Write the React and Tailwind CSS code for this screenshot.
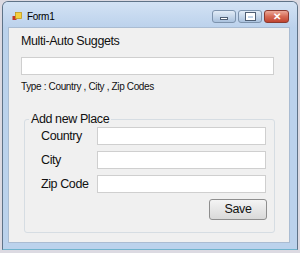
export default function App() {
  const font = "font-['Liberation_Sans',Arial,sans-serif]";
  return (
    <div className={`w-[300px] h-[253px] overflow-hidden bg-[#dcdae2] ${font}`}>
      <div className="ml-[2px] mt-[1px] w-[296px] h-[249px] rounded-t-[6px] border border-[#5f7388] border-b-[#6fb3cc] bg-[#bbd2ec] flex flex-col">
        {/* title bar */}
        <div className="h-[25px] rounded-t-[5px] bg-gradient-to-b from-[#d3e2f4] to-[#bcd2ec] flex items-start">
          <svg width="10" height="10" viewBox="0 0 10 10" className="ml-[9px] mt-[10px] shrink-0">
            <rect x="0.5" y="4" width="4" height="4" fill="#c0392b" />
            <rect x="3.5" y="0.5" width="6" height="6" fill="#f4d03f" stroke="#c49a1a" strokeWidth="0.8" />
          </svg>
          <span className="ml-[5px] mt-[9px] text-[10px] leading-[12px] tracking-[-0.3px] text-black">Form1</span>
          <div className="ml-auto mr-[8px] mt-[8px] flex gap-[2px]">
            <div className="w-[24px] h-[13px] rounded-[3px] border border-[#7d93ad] bg-gradient-to-b from-[#e2ecf7] via-[#c6d7ea] to-[#aac2de] flex items-center justify-center">
              <div className="w-[8px] h-[3px] mt-[4px] bg-white border border-[#4f5f74]" />
            </div>
            <div className="w-[24px] h-[13px] rounded-[3px] border border-[#7d93ad] bg-gradient-to-b from-[#e2ecf7] via-[#c6d7ea] to-[#aac2de] flex items-center justify-center">
              <div className="w-[9px] h-[7px] border-[2px] border-t-[3px] border-white outline outline-1 outline-[#4f5f74]" />
            </div>
            <div className="w-[25px] h-[13px] rounded-[3px] border border-[#8a3a30] bg-gradient-to-b from-[#eba898] via-[#d66a55] to-[#c04430] flex items-center justify-center">
              <span className="text-white text-[10px] leading-[10px] font-bold">✕</span>
            </div>
          </div>
        </div>
        {/* client area */}
        <div className="ml-[5px] w-[282px] h-[216px] bg-[#f0f0f0] border border-[#aabcd2] flex flex-col text-[#111]">
          <div className="ml-[12px] mt-[5px] text-[12.5px] leading-[16px] tracking-[-0.4px]">Multi-Auto Suggets</div>
          <div className="ml-[12px] mt-[8px] w-[253px] h-[18px] bg-white border border-[#cfcfcf]" />
          <div className="ml-[12px] mt-[6px] text-[10px] leading-[12px] tracking-[-0.35px]">Type : Country , City , Zip Codes</div>
          <fieldset className="ml-[15px] mt-[18px] w-[251px] h-[122px] border border-[#d6dde3] rounded-[3px] pb-[12px]">
            <legend className="ml-[4px] px-[2px] text-[12.5px] leading-[16px] tracking-[-0.4px]">Add new Place</legend>
            <div className="flex flex-col gap-[6px]">
              <div className="flex items-center h-[18px]">
                <span className="ml-[16px] w-[56px] text-[12.5px] leading-[16px] tracking-[-0.4px]">Country</span>
                <div className="w-[169px] h-[18px] bg-white border border-[#cfcfcf]" />
              </div>
              <div className="flex items-center h-[18px]">
                <span className="ml-[16px] w-[56px] text-[12.5px] leading-[16px] tracking-[-0.4px]">City</span>
                <div className="w-[169px] h-[18px] bg-white border border-[#cfcfcf]" />
              </div>
              <div className="flex items-center h-[18px]">
                <span className="ml-[16px] w-[56px] text-[12.5px] leading-[16px] tracking-[-0.4px]">Zip Code</span>
                <div className="w-[169px] h-[18px] bg-white border border-[#cfcfcf]" />
              </div>
              <div className="flex justify-end mr-[7px]">
                <div className="w-[58px] h-[21px] rounded-[3px] border border-[#8e8e8e] bg-gradient-to-b from-[#f4f4f4] to-[#d9d9d9] flex items-center justify-center text-[12.5px] tracking-[-0.4px]">Save</div>
              </div>
            </div>
          </fieldset>
        </div>
      </div>
    </div>
  );
}
